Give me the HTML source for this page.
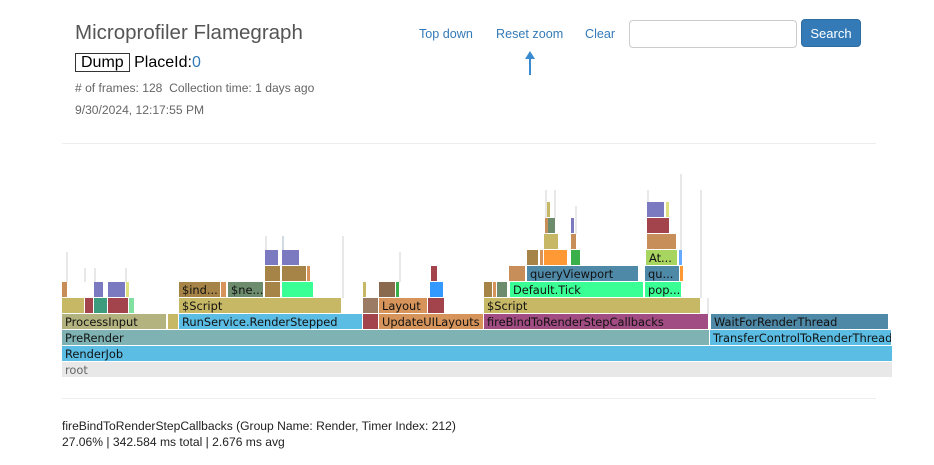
<!DOCTYPE html>
<html><head><meta charset="utf-8"><style>
body{margin:0;width:934px;height:465px;background:#fff;font-family:"Liberation Sans",Arial,sans-serif;position:relative;overflow:hidden}
.a{position:absolute;white-space:nowrap}
.f{position:absolute;height:15px;font:11.4px "DejaVu Sans",sans-serif;line-height:16px;padding-left:3px;box-sizing:border-box;overflow:hidden;white-space:nowrap;color:#111}
.l{position:absolute;width:2px;background:#e8e8e8}
a{color:#337ab7;text-decoration:none}
</style></head><body>
<div class="a" style="left:75px;top:21px;font-size:20.5px;color:#555">Microprofiler Flamegraph</div>
<div class="a" style="left:75px;top:54px;font-size:16px;color:#000"><span style="border:1px solid #333;padding:0 5px">Dump</span> PlaceId:<span style="color:#337ab7">0</span></div>
<div class="a" style="left:75px;top:81px;font-size:12.1px;color:#666"># of frames: 128&nbsp; Collection time: 1 days ago</div>
<div class="a" style="left:75px;top:103px;font-size:12.1px;color:#666">9/30/2024, 12:17:55 PM</div>
<div class="a" style="left:419px;top:27px;font-size:12.6px"><a>Top down</a></div>
<div class="a" style="left:496px;top:27px;font-size:12.6px"><a>Reset zoom</a></div>
<div class="a" style="left:585px;top:27px;font-size:12.6px"><a>Clear</a></div>
<svg class="a" style="left:522px;top:48px" width="16" height="28"><path d="M8 27V8" stroke="#3a8ad0" stroke-width="2"/><path d="M3 11L8 3L13 11Z" fill="#3a8ad0"/></svg>
<div class="a" style="left:629px;top:20px;width:166px;height:26px;border:1px solid #ccc;border-radius:4px"></div>
<div class="a" style="left:801px;top:19px;width:60px;height:28px;background:#337ab7;border:1px solid #2e6da4;border-radius:4px;color:#fff;font-size:13px;line-height:28px;text-align:center;box-sizing:border-box">Search</div>
<div class="a" style="left:62px;top:143px;width:814px;height:1px;background:#eee"></div>
<div class="a" style="left:62px;top:398px;width:814px;height:1px;background:#eee"></div>
<div class="a" style="left:62px;top:419px;font-size:12.1px;color:#222">fireBindToRenderStepCallbacks (Group Name: Render, Timer Index: 212)</div>
<div class="a" style="left:62px;top:435px;font-size:12.1px;color:#222">27.06% | 342.584 ms total | 2.676 ms avg</div>

<div class="l" style="left:66px;top:252px;height:30px"></div>
<div class="l" style="left:84px;top:268px;height:14px"></div>
<div class="l" style="left:94px;top:268px;height:14px"></div>
<div class="l" style="left:125px;top:268px;height:14px"></div>
<div class="l" style="left:265px;top:236px;height:14px"></div>
<div class="l" style="left:282px;top:236px;height:14px;background:#d0dae0"></div>
<div class="l" style="left:342px;top:236px;height:62px"></div>
<div class="l" style="left:399px;top:252px;height:30px"></div>
<div class="l" style="left:545px;top:190px;height:44px"></div>
<div class="l" style="left:554px;top:190px;height:28px"></div>
<div class="l" style="left:575px;top:206px;height:28px"></div>
<div class="l" style="left:647px;top:190px;height:12px"></div>
<div class="l" style="left:680px;top:174px;height:76px"></div>
<div class="l" style="left:700px;top:190px;height:108px"></div>
<div class="l" style="left:707px;top:298px;height:16px"></div>

<div class="f" style="left:62px;top:362px;width:830px;background:#e8e8e8;color:#666">root</div>
<div class="f" style="left:62px;top:346px;width:830px;background:#5bbde4">RenderJob</div>
<div class="f" style="left:62px;top:330px;width:647px;background:#7fb3b3">PreRender</div>
<div class="f" style="left:710px;top:330px;width:181px;background:#5bbde4">TransferControlToRenderThread</div>

<div class="f" style="left:62px;top:314px;width:104px;background:#b3b37f">ProcessInput</div>
<div class="f" style="left:168px;top:314px;width:10px;background:#c7b866"></div>
<div class="f" style="left:179px;top:314px;width:183px;background:#5bbde4">RunService.RenderStepped</div>
<div class="f" style="left:363px;top:314px;width:15px;background:#a3434b"></div>
<div class="f" style="left:379px;top:314px;width:104px;background:#d6945a">UpdateUILayouts</div>
<div class="f" style="left:484px;top:314px;width:224px;background:#a24c84">fireBindToRenderStepCallbacks</div>
<div class="f" style="left:711px;top:314px;width:177px;background:#4f89a8">WaitForRenderThread</div>

<div class="f" style="left:62px;top:298px;width:22px;background:#c7b866"></div>
<div class="f" style="left:85px;top:298px;width:8px;background:#a3434b"></div>
<div class="f" style="left:94px;top:298px;width:13px;background:#3e9c7e"></div>
<div class="f" style="left:108px;top:298px;width:20px;background:#a3434b"></div>
<div class="f" style="left:129px;top:298px;width:5px;background:#80e0a0"></div>
<div class="f" style="left:179px;top:298px;width:162px;background:#c7b866">$Script</div>
<div class="f" style="left:363px;top:298px;width:15px;background:#9c7b64"></div>
<div class="f" style="left:379px;top:298px;width:48px;background:#d6945a">Layout</div>
<div class="f" style="left:428px;top:298px;width:16px;background:#a3434b"></div>
<div class="f" style="left:484px;top:298px;width:216px;background:#c7b866">$Script</div>

<div class="f" style="left:62px;top:282px;width:5px;background:#c88e5a"></div>
<div class="f" style="left:94px;top:282px;width:9px;background:#7b79c0"></div>
<div class="f" style="left:108px;top:282px;width:17px;background:#7b79c0"></div>
<div class="f" style="left:126px;top:282px;width:2px;background:#e0e080"></div>
<div class="f" style="left:179px;top:282px;width:41px;background:#a68447">$ind...</div>
<div class="f" style="left:221px;top:282px;width:5px;background:#d6945a"></div>
<div class="f" style="left:228px;top:282px;width:35px;background:#6d8c6d">$ne...</div>
<div class="f" style="left:265px;top:282px;width:15px;background:#a68447"></div>
<div class="f" style="left:282px;top:282px;width:31px;background:#3aff94"></div>
<div class="f" style="left:363px;top:282px;width:2px;background:#c7b866"></div>
<div class="f" style="left:379px;top:282px;width:16px;background:#8a6a4e"></div>
<div class="f" style="left:396px;top:282px;width:3px;background:#3ab04a"></div>
<div class="f" style="left:430px;top:282px;width:13px;background:#3399ff"></div>
<div class="f" style="left:484px;top:282px;width:8px;background:#a68447"></div>
<div class="f" style="left:493px;top:282px;width:2px;background:#d6945a"></div>
<div class="f" style="left:497px;top:282px;width:10px;background:#6d8c6d"></div>
<div class="f" style="left:510px;top:282px;width:133px;background:#3aff94">Default.Tick</div>
<div class="f" style="left:645px;top:282px;width:36px;background:#3aff94">pop...</div>

<div class="f" style="left:265px;top:266px;width:15px;background:#a68447"></div>
<div class="f" style="left:282px;top:266px;width:24px;background:#a68447"></div>
<div class="f" style="left:307px;top:266px;width:2px;background:#d6945a"></div>
<div class="f" style="left:431px;top:266px;width:6px;background:#a3434b"></div>
<div class="f" style="left:509px;top:266px;width:16px;background:#c88e5a"></div>
<div class="f" style="left:527px;top:266px;width:111px;background:#4f89a8">queryViewport</div>
<div class="f" style="left:645px;top:266px;width:34px;background:#4f89a8">qu...</div>
<div class="f" style="left:680px;top:266px;width:2px;background:#ff9933"></div>

<div class="f" style="left:265px;top:250px;width:13px;background:#7b79c0"></div>
<div class="f" style="left:282px;top:250px;width:17px;background:#7b79c0"></div>
<div class="f" style="left:527px;top:250px;width:11px;background:#a68447"></div>
<div class="f" style="left:540px;top:250px;width:2px;background:#d6945a"></div>
<div class="f" style="left:544px;top:250px;width:23px;background:#ff9933"></div>
<div class="f" style="left:571px;top:250px;width:9px;background:#3ab04a"></div>
<div class="f" style="left:646px;top:250px;width:31px;background:#a8d460">At...</div>
<div class="f" style="left:679px;top:250px;width:2px;background:#66aaff"></div>

<div class="f" style="left:544px;top:234px;width:14px;background:#c7b866"></div>
<div class="f" style="left:571px;top:234px;width:5px;background:#c88e5a"></div>
<div class="f" style="left:647px;top:234px;width:29px;background:#c88e5a"></div>

<div class="f" style="left:545px;top:218px;width:2px;background:#c88e5a"></div>
<div class="f" style="left:548px;top:218px;width:7px;background:#6d8c6d"></div>
<div class="f" style="left:571px;top:218px;width:3px;background:#7b79c0"></div>
<div class="f" style="left:647px;top:218px;width:22px;background:#a3434b"></div>

<div class="f" style="left:547px;top:202px;width:3px;background:#c7b866"></div>
<div class="f" style="left:647px;top:202px;width:17px;background:#7b79c0"></div>
<div class="f" style="left:666px;top:202px;width:2px;background:#e0e080"></div>
</body></html>
